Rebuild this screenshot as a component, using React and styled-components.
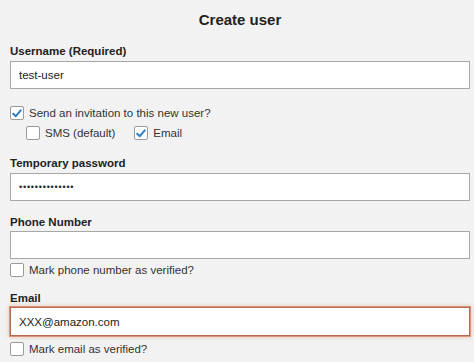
import styled, { createGlobalStyle } from 'styled-components'

const GlobalStyle = createGlobalStyle`
    html, body {
        margin: 0;
        padding: 0;
        background: #f2f2f2;
    }
    body {
        font-family: "Liberation Sans", Arial, Helvetica, sans-serif;
        color: #222;
    }
`

const Page = styled.form`
    display: flex;
    flex-direction: column;
    width: 474px;
    height: 362px;
    box-sizing: border-box;
    padding: 10px 4px 0 10px;
    background: #f2f2f2;
    overflow: hidden;
`

const Title = styled.h1`
    margin: 0;
    font-size: 15px;
    line-height: 20px;
    font-weight: bold;
    text-align: center;
    color: #222;
`

// fields

const Label = styled.label`
    display: block;
    margin-top: ${props => props.$top}px;
    font-size: 11.5px;
    line-height: 16px;
    font-weight: bold;
    color: #222;
`

const Input = styled.input`
    display: block;
    box-sizing: border-box;
    width: 460px;
    height: ${props => props.$height || 28}px;
    margin: ${props => props.$gap || 2}px 0 0;
    padding: 0 8px;
    border: 1px solid ${props => props.$focus ? '#b5694d' : '#a8a8a8'};
    border-radius: 0;
    background: #fff;
    box-shadow: ${props => props.$focus ? '0 0 0 1px #d9987c, 0 0 4px 1px rgba(214, 130, 95, 0.45)' : 'none'};
    font-family: inherit;
    font-size: 11.5px;
    color: #222;
    outline: none;
`

const Dots = styled(Input)`
    font-size: 9px;
    letter-spacing: 0.8px;
    color: #222;
`

// checkboxes

const CheckRow = styled.div`
    display: flex;
    align-items: center;
    height: 18px;
    margin-top: ${props => props.$top}px;
    padding-left: ${props => props.$indent || 0}px;
`

const Check = styled.label`
    display: flex;
    align-items: center;
    gap: 5px;
    margin-right: ${props => props.$space || 0}px;
    font-size: 11.5px;
    color: #333;
`

const Box = styled.span`
    display: flex;
    align-items: center;
    justify-content: center;
    box-sizing: border-box;
    width: 14px;
    height: 14px;
    border: 1px solid #9a9a9a;
    border-radius: 2px;
    background: #fff;
`

function Checkbox({ checked, children, space }) {
    return (
        <Check $space={space}>
            <Box>
                {checked && (
                    <svg width="10" height="9" viewBox="0 0 10 9">
                        <path d="M1.2 4.8 L3.8 7.2 L8.8 1.4" fill="none" stroke="#2f7ec5" strokeWidth="2" strokeLinecap="round" strokeLinejoin="round"/>
                    </svg>
                )}
            </Box>
            <span>{children}</span>
        </Check>
    )
}

export default function App() {
    return (
        <>
            <GlobalStyle/>
            <Page>
                <Title>Create user</Title>

                <Label $top={13}>Username (Required)</Label>
                <Input defaultValue="test-user" readOnly/>

                <CheckRow $top={15}>
                    <Checkbox checked>Send an invitation to this new user?</Checkbox>
                </CheckRow>
                <CheckRow $top={2} $indent={16}>
                    <Checkbox space={19}>SMS (default)</Checkbox>
                    <Checkbox checked>Email</Checkbox>
                </CheckRow>

                <Label $top={13}>Temporary password</Label>
                <Dots defaultValue={'\u2022'.repeat(14)} readOnly/>

                <Label $top={13}>Phone Number</Label>
                <Input $gap={1} readOnly/>

                <CheckRow $top={2}>
                    <Checkbox>Mark phone number as verified?</Checkbox>
                </CheckRow>

                <Label $top={11}>Email</Label>
                <Input $focus $gap={1} $height={29} defaultValue="XXX@amazon.com" readOnly/>

                <CheckRow $top={4}>
                    <Checkbox>Mark email as verified?</Checkbox>
                </CheckRow>
            </Page>
        </>
    )
}
